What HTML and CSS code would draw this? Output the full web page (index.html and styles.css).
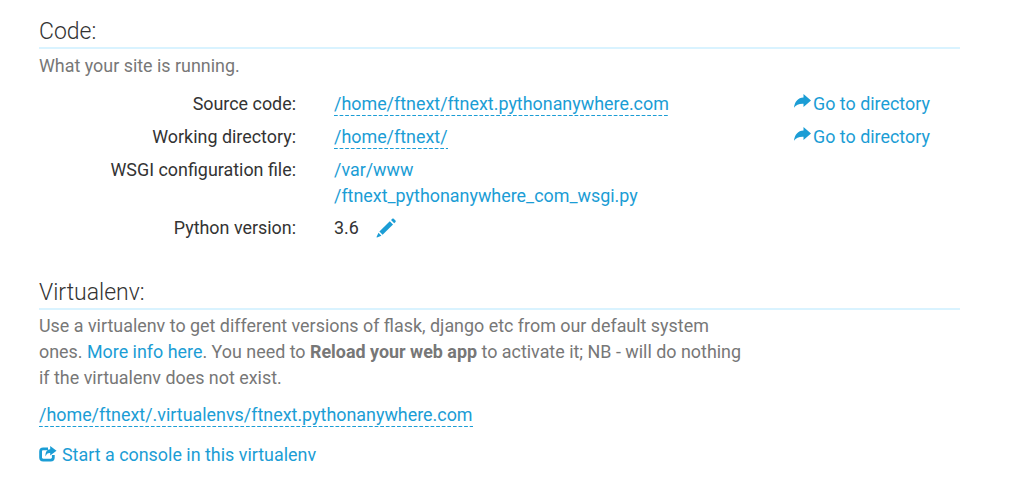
FILE: index.html
```html
<!DOCTYPE html>
<html>
	<head>
		<meta charset="utf-8">
		<title>Web app</title>
		<link rel="stylesheet" href="styles.css">
	</head>
	<body>
		<div class="page">
			<h3 class="title">Code:</h3>
			<p class="desc">What your site is running.</p>
			<div class="rows">
				<div class="row">
					<div class="label">Source code:</div>
					<div class="value"><a class="editable">/home/ftnext/ftnext.pythonanywhere.com</a></div>
					<div class="goto"><a><svg class="share" viewBox="0 0 17 14"><path d="M17 6.500 9.500 0v3.500C4 3.800.8 7.500 0 13.800c2-2.900 5-4.300 9.500-4.100V13z"/></svg>Go to directory</a></div>
				</div>
				<div class="row">
					<div class="label">Working directory:</div>
					<div class="value"><a class="editable">/home/ftnext/</a></div>
					<div class="goto"><a><svg class="share" viewBox="0 0 17 14"><path d="M17 6.500 9.500 0v3.500C4 3.800.8 7.500 0 13.800c2-2.900 5-4.300 9.500-4.100V13z"/></svg>Go to directory</a></div>
				</div>
				<div class="row wsgi">
					<div class="label">WSGI configuration file:</div>
					<div class="value"><a>/var/www<br>/ftnext_pythonanywhere_com_wsgi.py</a></div>
				</div>
				<div class="row">
					<div class="label">Python version:</div>
					<div class="value version">3.6 <svg class="pencil" viewBox="0 0 20 20"><path d="M13.800 3.200 17 6.400 6.600 16.800 3.400 13.600z"/><path d="M15 2 16.300.7c.4-.4 1-.4 1.400 0l1.800 1.800c.4.400.4 1 0 1.400L18.200 5.200z"/><path d="M2.500 14.800 5.400 17.700 1 19.500c-.3.100-.6-.2-.5-.5z"/></svg></div>
				</div>
			</div>

			<h3 class="title second">Virtualenv:</h3>
			<p class="desc wide">Use a virtualenv to get different versions of flask, django etc from our default system ones. <a>More info here</a>. You need to <b>Reload your web app</b> to activate it; NB - will do nothing if the virtualenv does not exist.</p>
			<p class="venv"><a class="editable">/home/ftnext/.virtualenvs/ftnext.pythonanywhere.com</a></p>
			<p class="console"><a><svg class="external" viewBox="0 0 18 16"><path d="M9 1.500H4.200a4 4 0 0 0-4 4v6a4 4 0 0 0 4 4h7.500a4 4 0 0 0 4-4V9h-2.800v2.500c0 .7-.5 1.200-1.200 1.200H4.200c-.7 0-1.200-.5-1.200-1.200v-6c0-.7.5-1.200 1.200-1.200H9z"/><path d="M11.200 0 17.500 4.800 11.200 9.600V7C8.500 6.900 7.500 8 6.500 10.500 6.200 6 8 3.400 11.200 3.200z"/></svg>Start a console in this virtualenv</a></p>
		</div>
	</body>
</html>
```

FILE: styles.css
```css
* {
	margin: 0;
	padding: 0;
}

body {
	font-family: Roboto, "Liberation Sans", sans-serif;
	font-size: 17.9px;
	line-height: 26px;
	color: #333;
	background: #fff;
}

a {
	color: #1b9dd5;
}

.page {
	width: 921px;
	margin-left: 39px;
	padding-top: 17px;
}

/* section headings */
.title {
	font-size: 23px;
	font-weight: 300;
	line-height: 30px;
	border-bottom: 2px solid #d9f3ff;
}

.second {
	margin-top: 37px;
}

.desc {
	color: #777;
	margin-top: 4px;
}

.wide {
	width: 710px;
	margin-top: 3px;
}

/* label / value rows */
.rows {
	margin-top: 12px;
}

.row {
	display: flex;
	margin-bottom: 7px;
}

.wsgi {
	margin-bottom: 6px;
}

.label {
	width: 257px;
	text-align: right;
}

.value {
	width: 460px;
	margin-left: 38px;
}

.version {
	display: flex;
	align-items: center;
	gap: 17px;
}

/* dashed underline, longer dashes than border: dashed gives */
.editable {
	padding-bottom: 2px;
	background: linear-gradient(to right, #1b9dd5 62%, transparent 62%) left bottom / 5.6px 1px repeat-x;
}

.share {
	width: 17px;
	height: 14px;
	margin-right: 2px;
	fill: #1b9dd5;
	vertical-align: 2px;
}

.pencil {
	width: 20px;
	height: 20px;
	fill: #1b9dd5;
}

.venv {
	margin-top: 11px;
}

.console {
	margin-top: 14px;
}

.external {
	width: 18px;
	height: 16px;
	fill: #1b9dd5;
	margin-right: 5px;
	vertical-align: -1px;
}
```
